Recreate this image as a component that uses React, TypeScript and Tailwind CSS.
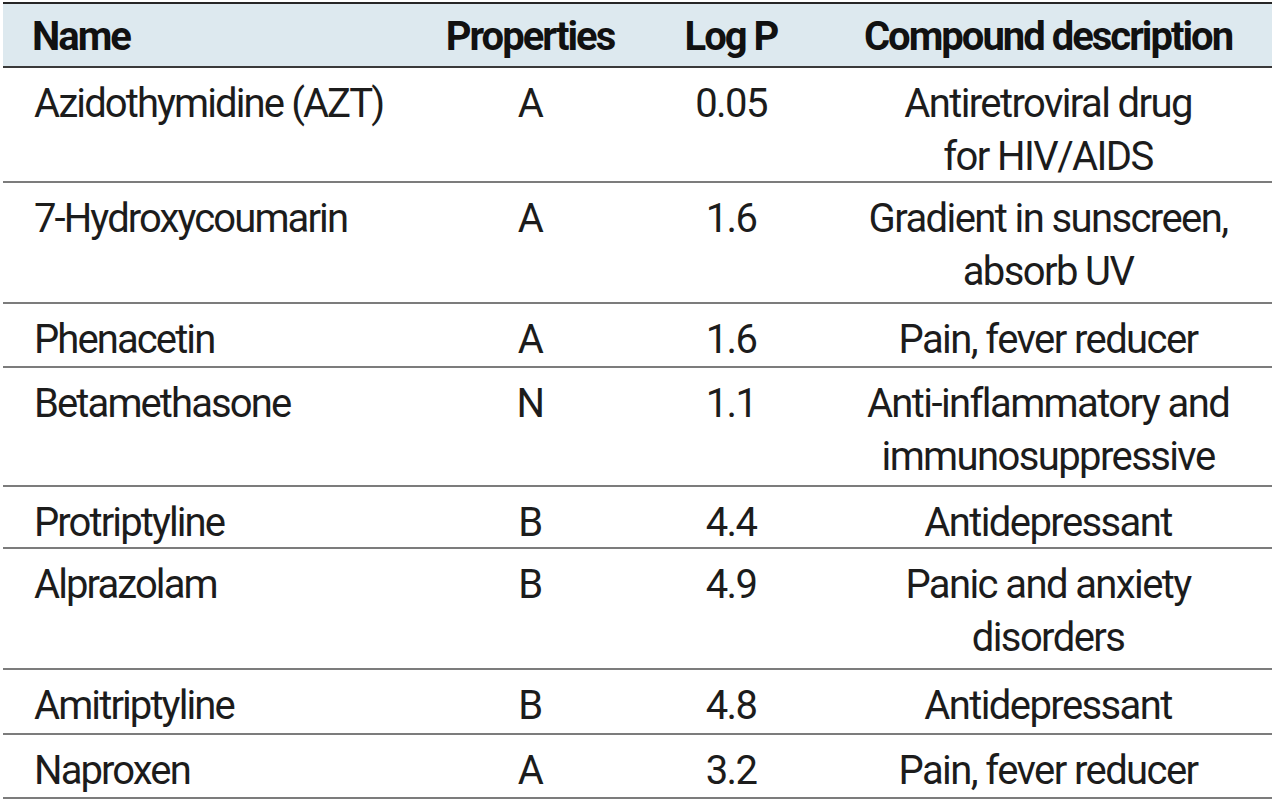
const rows = [
  { name: 'Azidothymidine (AZT)', prop: 'A', logp: '0.05', desc: ['Antiretroviral drug', 'for HIV/AIDS'], h: 'h-[115px]' },
  { name: '7-Hydroxycoumarin', prop: 'A', logp: '1.6', desc: ['Gradient in sunscreen,', 'absorb UV'], h: 'h-[121px]' },
  { name: 'Phenacetin', prop: 'A', logp: '1.6', desc: ['Pain, fever reducer'], h: 'h-[64px]' },
  { name: 'Betamethasone', prop: 'N', logp: '1.1', desc: ['Anti-inflammatory and', 'immunosuppressive'], h: 'h-[119px]' },
  { name: 'Protriptyline', prop: 'B', logp: '4.4', desc: ['Antidepressant'], h: 'h-[62px]' },
  { name: 'Alprazolam', prop: 'B', logp: '4.9', desc: ['Panic and anxiety', 'disorders'], h: 'h-[121px]' },
  { name: 'Amitriptyline', prop: 'B', logp: '4.8', desc: ['Antidepressant'], h: 'h-[65px]' },
  { name: 'Naproxen', prop: 'A', logp: '3.2', desc: ['Pain, fever reducer'], h: 'h-[64px]' },
]

const cols = 'grid grid-cols-[437px_180px_222px_1fr]'

export default function App() {
  return (
    <main className="min-h-screen bg-white pt-[2px] pl-[3px] font-['Roboto',sans-serif] text-[40px] tracking-[-1.6px] text-[#1c1c1c]">
      <div className="w-[1269px]">
        {/* Header */}
        <div className={`${cols} h-[66px] items-center border-y-2 border-t-[#262626] border-b-[#3a3a3a] bg-[#dde9ef] pt-[3px] font-bold tracking-[-2px] text-[#111]`}>
          <div className="pl-[29px]">Name</div>
          <div className="text-center">Properties</div>
          <div className="text-center">Log P</div>
          <div className="pr-[18px] text-center">Compound description</div>
        </div>

        {rows.map((r) => (
          <div key={r.name} className={`${cols} ${r.h} border-b-2 border-[#7c7c7c] pt-[9px] leading-[53px]`}>
            <div className="pl-[31px] tracking-[-1.9px]">{r.name}</div>
            <div className="text-center">{r.prop}</div>
            <div className="text-center">{r.logp}</div>
            <div className="pr-[18px] text-center">
              {r.desc.map((d) => (
                <div key={d}>{d}</div>
              ))}
            </div>
          </div>
        ))}
      </div>
    </main>
  )
}
